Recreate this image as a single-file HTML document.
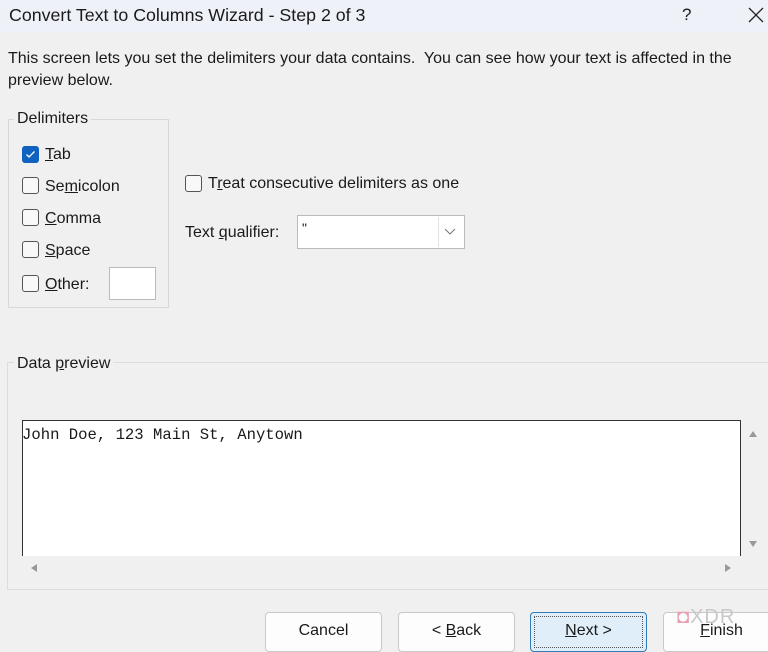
<!DOCTYPE html>
<html><head><style>
*{margin:0;padding:0;box-sizing:border-box}
body{width:768px;height:648px;overflow:hidden;background:#f0f0f0;font-family:"Liberation Sans",sans-serif;font-size:16px;color:#1a1a1a;position:relative}
.a{position:absolute;white-space:nowrap}
.cb{position:absolute;width:17px;height:17px;border:1px solid #555;border-radius:3px;background:#f8f8f8}
.btn{position:absolute;top:612px;height:40px;width:117px;border:1px solid #c8c8c8;border-radius:4px;background:#fdfdfd;text-align:center;line-height:36px;font-size:16px}
u{text-decoration:underline}
</style></head><body>
<div class="a" style="left:0;top:0;width:768px;height:32px;background:#eef2f8"></div>
<div class="a" style="left:9px;top:5px;font-size:17.8px">Convert Text to Columns Wizard - Step 2 of 3</div>
<div class="a" style="left:682px;top:5px;font-size:17px">?</div>
<svg class="a" style="left:748px;top:7px" width="16" height="16"><path d="M1 1L15 15M15 1L1 15" stroke="#222" stroke-width="1.3"/></svg>
<div class="a" style="left:8px;top:48px;line-height:22px">This screen lets you set the delimiters your data contains.&nbsp; You can see how your text is affected in the<br>preview below.</div>

<div class="a" style="left:8px;top:119px;width:161px;height:189px;border:1px solid #d8d8d8"></div>
<div class="a" style="left:14px;top:110px;background:#f0f0f0;padding:0 3px">Delimiters</div>
<div class="cb" style="left:22px;top:146px;background:#0f62c0;border-color:#0f62c0"><svg width="15" height="15" style="position:absolute;left:0;top:0"><path d="M3.5 7.5L6 10L11.5 4.5" stroke="#fff" stroke-width="1.3" fill="none"/></svg></div>
<div class="a" style="left:45px;top:146px"><u>T</u>ab</div>
<div class="cb" style="left:22px;top:177px"></div>
<div class="a" style="left:45px;top:178px">Se<u>m</u>icolon</div>
<div class="cb" style="left:22px;top:209px"></div>
<div class="a" style="left:45px;top:210px"><u>C</u>omma</div>
<div class="cb" style="left:22px;top:241px"></div>
<div class="a" style="left:45px;top:242px"><u>S</u>pace</div>
<div class="cb" style="left:22px;top:275px"></div>
<div class="a" style="left:45px;top:276px"><u>O</u>ther:</div>
<div class="a" style="left:109px;top:267px;width:47px;height:33px;background:#fff;border:1px solid #bbb"></div>

<div class="cb" style="left:185px;top:175px"></div>
<div class="a" style="left:208px;top:175px">T<u>r</u>eat consecutive delimiters as one</div>
<div class="a" style="left:185px;top:224px">Text <u>q</u>ualifier:</div>
<div class="a" style="left:297px;top:215px;width:168px;height:34px;background:#fff;border:1px solid #bbb"></div>
<div class="a" style="left:302px;top:220px;font-size:14px">"</div>
<div class="a" style="left:438px;top:217px;width:25px;height:30px;border-left:1px solid #e2e2e2"></div>
<svg class="a" style="left:444px;top:228px" width="12" height="8"><path d="M1 1L6 6L11 1" stroke="#777" fill="none"/></svg>

<div class="a" style="left:7px;top:362px;width:770px;height:228px;border:1px solid #dcdcdc;border-right:none"></div>
<div class="a" style="left:14px;top:355px;background:#f0f0f0;padding:0 3px">Data <u>p</u>review</div>
<div class="a" style="left:22px;top:420px;width:719px;height:136px;background:#fff;border:1px solid #333;border-bottom:none"></div>
<div class="a" style="left:22px;top:426px;font-family:'Liberation Mono',monospace;font-size:15.6px">John Doe, 123 Main St, Anytown</div>
<svg class="a" style="left:748px;top:430px" width="10" height="8"><path d="M1 7L5 1L9 7Z" fill="#999"/></svg>
<svg class="a" style="left:748px;top:540px" width="10" height="8"><path d="M1 1L5 7L9 1Z" fill="#999"/></svg>
<svg class="a" style="left:30px;top:563px" width="8" height="10"><path d="M7 1L1 5L7 9Z" fill="#999"/></svg>
<svg class="a" style="left:724px;top:563px" width="8" height="10"><path d="M1 1L7 5L1 9Z" fill="#999"/></svg>

<div class="btn" style="left:265px">Cancel</div>
<div class="btn" style="left:398px">&lt; <u>B</u>ack</div>
<div class="btn" style="left:530px;background:#e0eef9;border-color:#2f7cb8"><div style="position:absolute;left:3px;top:3px;right:3px;bottom:3px;border:1px dotted #555"></div><u>N</u>ext &gt;</div>
<div class="btn" style="left:663px"><u>F</u>inish</div>
<div class="a" style="left:677px;top:606px;font-size:20px;color:#c8c8c8;letter-spacing:1px"><span style="color:#e8a0b0">◘</span>XDR</div>
</body></html>
